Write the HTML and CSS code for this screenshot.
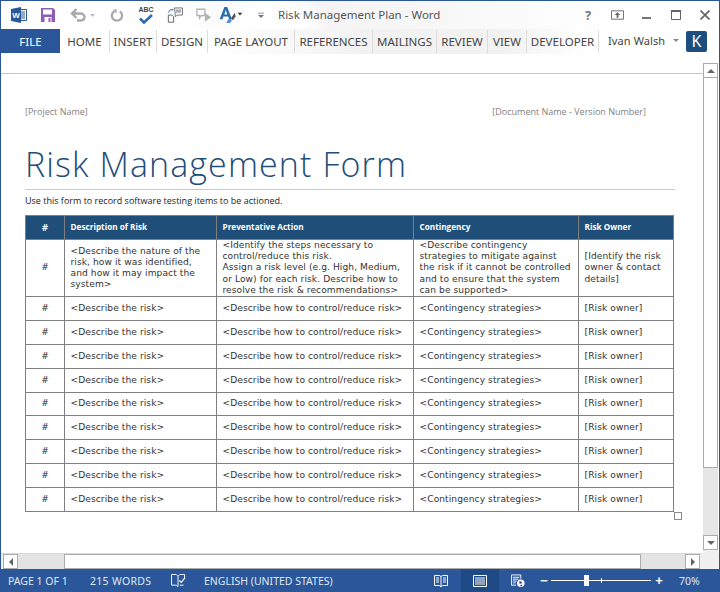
FILE: index.html
```html
<!DOCTYPE html>
<html lang="en">
<head>
<meta charset="utf-8">
<title>Risk Management Plan - Word</title>
<link rel="stylesheet" href="styles.css">
</head>
<body>
<div class="window">
  <header class="titlebar">
    <div class="qat">
      <svg class="ic word" viewBox="0 0 16 16"><path fill="#fff" stroke="#2b579a" d="M8 2.500h7.500v11H8z"/><path stroke="#2b579a" d="M10 5h4M10 7h4M10 9h4M10 11h4"/><path fill="#2b579a" d="M0 2l10-2v16L0 14z"/><text x="1.300" y="10.800" class="word-w">W</text></svg>
      <svg class="ic save" viewBox="0 0 14 14"><path fill="#8e5bb5" d="M0 0h12l2 2v12H0z"/><path fill="#fff" d="M2 1.500h9v5H2zM3.500 9h7v5h-7z"/><path fill="#8e5bb5" d="M7.500 10h2v4h-2z"/></svg>
      <svg class="ic undo" viewBox="0 0 25 14"><path fill="none" stroke="#a9a9a9" stroke-width="2.400" d="M3 5.500h7c6 0 6 7 0 7H7M6.500 1l-4.500 4.500 4.500 4.500"/><path fill="#bdbdbd" d="M20 6h5l-2.500 3z"/></svg>
      <svg class="ic redo" viewBox="0 0 14 14"><path fill="none" stroke="#a9a9a9" stroke-width="2.400" d="M4.500 2.500a5.500 5.500 0 1 0 6 0"/><path fill="#a9a9a9" d="M7 0v5L3 1z"/></svg>
      <span class="abc-wrap"><span class="abc">ABC</span><svg class="abc-check" viewBox="0 0 14 10"><path fill="none" stroke="#2b6cb0" stroke-width="2.600" d="M1 4.500l4 4 8-7.500"/></svg></span>
      <svg class="ic touch" viewBox="0 0 18 18"><path fill="#fff" stroke="#555" d="M1.500 8.500h4l2 2v6h-6z"/><path fill="#fff" stroke="#666" d="M8.500.5h9v8h-6l-2 2z"/><path stroke="#666" d="M10 3h6M10 5h6"/><path fill="none" stroke="#2b6cb0" d="M2 6c0-3 2-4 5-4M5 4l2-2"/></svg>
      <svg class="ic comment" viewBox="0 0 18 16"><path fill="#fff" stroke="#b3b3b3" stroke-width="1.500" d="M1 1h9v7H6l-2 3V8H1z"/><path fill="#b3b3b3" d="M10 5l7 5-7 5z"/></svg>
      <svg class="ic font" viewBox="0 0 24 18"><path fill="#2b6cb0" d="M5 0h3l5 13h-3l-1-3H4l-1 3H0zM5 8h3L6.500 3z"/><path fill="#555" d="M16 6l-4 6 2 2 3-4z"/><path fill="#4a90d9" d="M10 12l3 2-2 3H7z"/><path fill="#333" d="M19 6h5l-2.500 3z"/></svg>
      <svg class="ic custom" viewBox="0 0 8 8"><path fill="#777" d="M0 1h8v1H0zM0 4h8L4 8z"/></svg>
    </div>
    <h1 class="doc-title">Risk Management Plan - Word</h1>
    <div class="winctl">
      <span class="help">?</span>
      <svg class="ic display" viewBox="0 0 14 10"><path fill="none" stroke="#666" d="M.5.500h13v9H.5z"/><path fill="#666" d="M7 2l3 3H8v3H6V5H4z"/></svg>
      <svg class="ic min" viewBox="0 0 10 2"><path fill="#666" d="M0 0h10v2H0z"/></svg>
      <svg class="ic max" viewBox="0 0 10 10"><path fill="none" stroke="#666" d="M.5.500h9v9h-9z"/><path stroke="#666" stroke-width="2" d="M0 1h10"/></svg>
      <svg class="ic close" viewBox="0 0 10 10"><path stroke="#666" stroke-width="1.700" d="M.5.500l9 9M9.500.500l-9 9"/></svg>
    </div>
  </header>
  <nav class="tabs">
    <span class="file-tab">FILE</span>
    <span class="tab tab-home">HOME</span>
    <span class="tab tab-insert">INSERT</span>
    <span class="tab tab-design">DESIGN</span>
    <span class="tab tab-layout">PAGE LAYOUT</span>
    <span class="tab tab-refs">REFERENCES</span>
    <span class="tab tab-mail">MAILINGS</span>
    <span class="tab tab-review">REVIEW</span>
    <span class="tab tab-view">VIEW</span>
    <span class="tab tab-dev">DEVELOPER</span>
    <span class="user">Ivan Walsh <i class="caret"></i></span>
    <span class="avatar">K</span>
  </nav>
  <div class="workspace">
    <div class="main">
      <div class="collapsed"></div>
      <main class="doc">
        <div class="runhead"><span>[Project Name]</span><span>[Document Name - Version Number]</span></div>
        <h2 class="form-title">Risk Management Form</h2>
        <p class="intro">Use this form to record software testing items to be actioned.</p>
        <div class="table-wrap">
          <table class="risk">
            <colgroup><col class="c1"><col class="c2"><col class="c3"><col class="c4"><col class="c5"></colgroup>
            <thead><tr><th class="num">#</th><th>Description of Risk</th><th>Preventative Action</th><th>Contingency</th><th>Risk Owner</th></tr></thead>
            <tbody>
              <tr class="first"><td class="num">#</td><td>&lt;Describe the nature of the risk, how it was identified, and how it may impact the system&gt;</td><td>&lt;Identify the steps necessary to control/reduce this risk.<br>Assign a risk level (e.g. High, Medium, or Low) for each risk. Describe how to resolve the risk &amp; recommendations&gt;</td><td>&lt;Describe contingency strategies to mitigate against the risk if it cannot be controlled and to ensure that the system can be supported&gt;</td><td>[Identify the risk owner &amp; contact details]</td></tr>
              <tr><td class="num">#</td><td>&lt;Describe the risk&gt;</td><td>&lt;Describe how to control/reduce risk&gt;</td><td>&lt;Contingency strategies&gt;</td><td>[Risk owner]</td></tr>
              <tr><td class="num">#</td><td>&lt;Describe the risk&gt;</td><td>&lt;Describe how to control/reduce risk&gt;</td><td>&lt;Contingency strategies&gt;</td><td>[Risk owner]</td></tr>
              <tr><td class="num">#</td><td>&lt;Describe the risk&gt;</td><td>&lt;Describe how to control/reduce risk&gt;</td><td>&lt;Contingency strategies&gt;</td><td>[Risk owner]</td></tr>
              <tr><td class="num">#</td><td>&lt;Describe the risk&gt;</td><td>&lt;Describe how to control/reduce risk&gt;</td><td>&lt;Contingency strategies&gt;</td><td>[Risk owner]</td></tr>
              <tr><td class="num">#</td><td>&lt;Describe the risk&gt;</td><td>&lt;Describe how to control/reduce risk&gt;</td><td>&lt;Contingency strategies&gt;</td><td>[Risk owner]</td></tr>
              <tr><td class="num">#</td><td>&lt;Describe the risk&gt;</td><td>&lt;Describe how to control/reduce risk&gt;</td><td>&lt;Contingency strategies&gt;</td><td>[Risk owner]</td></tr>
              <tr><td class="num">#</td><td>&lt;Describe the risk&gt;</td><td>&lt;Describe how to control/reduce risk&gt;</td><td>&lt;Contingency strategies&gt;</td><td>[Risk owner]</td></tr>
              <tr><td class="num">#</td><td>&lt;Describe the risk&gt;</td><td>&lt;Describe how to control/reduce risk&gt;</td><td>&lt;Contingency strategies&gt;</td><td>[Risk owner]</td></tr>
              <tr><td class="num">#</td><td>&lt;Describe the risk&gt;</td><td>&lt;Describe how to control/reduce risk&gt;</td><td>&lt;Contingency strategies&gt;</td><td>[Risk owner]</td></tr>
            </tbody>
          </table>
          <span class="resize"></span>
        </div>
      </main>
    </div>
    <aside class="vscroll">
      <span class="sbtn"><i class="tri up"></i></span>
      <span class="vthumb"></span>
      <span class="vtrack"></span>
      <span class="sbtn"><i class="tri down"></i></span>
    </aside>
  </div>
  <div class="hscroll">
    <span class="sbtn"><i class="tri left"></i></span>
    <span class="htrack htrack-l"></span>
    <span class="hthumb"></span>
    <span class="htrack htrack-r"></span>
    <span class="sbtn"><i class="tri right"></i></span>
  </div>
  <footer class="status">
    <span class="st st-page">PAGE 1 OF 1</span>
    <span class="st st-words">215 WORDS</span>
    <svg class="proof" viewBox="0 0 16 14"><path fill="none" stroke="#fff" d="M.5.500h5l2 2v11l-2-1.500h-5zM7.500 2.500l2-2h5v5M9.500 12h4"/><path fill="none" stroke="#fff" stroke-width="1.300" d="M9 7l2 2 4-5"/></svg>
    <span class="st st-lang">ENGLISH (UNITED STATES)</span>
    <div class="views">
      <svg class="vw" viewBox="0 0 14 14"><path fill="none" stroke="#fff" d="M.5 1.500h5l1.500 1 1.500-1h5v10h-5L7 13l-1.500-1.500h-5zM7 2.500V13"/><path stroke="#fff" d="M2 4h3M2 6h3M2 8h3M9 4h3M9 6h3M9 8h3"/></svg>
      <span class="vw-active"><svg class="vw-print" viewBox="0 0 14 12"><path fill="none" stroke="#fff" d="M.5.500h13v11H.5z"/><path stroke="#fff" d="M2 3h10M2 5h10M2 7h10M2 9h10"/></svg></span>
      <svg class="vw" viewBox="0 0 15 14"><path fill="none" stroke="#fff" d="M.5.500h10v4M.5.500v11h5"/><path stroke="#fff" d="M2 3h7M2 5h6M2 7h4M2 9h3"/><circle cx="10.500" cy="9.500" r="4" fill="#fff"/><path fill="#2b579a" d="M9 7l3 1-1 2-2 0zM10 11h2v1.500h-2z"/></svg>
    </div>
    <div class="zoom">
      <span class="zm">−</span>
      <span class="slider"><i class="mid"></i><i class="thumb"></i></span>
      <span class="zm">+</span>
    </div>
    <span class="st st-pct">70%</span>
  </footer>
</div>
</body>
</html>
```

FILE: styles.css
```css
* { box-sizing: border-box; }
html, body { margin: 0; padding: 0; background: #fff; }
body { font-family: "Noto Sans", "Open Sans", sans-serif; }
.window {
  width: 720px; height: 592px; overflow: hidden;
  display: flex; flex-direction: column;
  border: 1px solid #2b579a; border-bottom: 0;
  background: #fff;
}
.titlebar {
  height: 28px; flex: none; display: flex; align-items: center; position: relative;
  background:
    radial-gradient(ellipse 60px 30px at 270px 20px, #fff 60%, transparent 100%),
    linear-gradient(90deg, #fff 25%, #f3f3f3 40%, #f7f7f7 60%, #fff 85%);
}
.ic { display: block; flex: none; }
.qat { display: flex; align-items: center; width: 277px; flex: none; }
.word { width: 16px; height: 16px; margin-left: 10px; }
.word-w { font: bold 8px "Liberation Sans", sans-serif; fill: #fff; }
.save { width: 14px; height: 14px; margin-left: 14px; }
.undo { width: 25px; height: 14px; margin-left: 15px; }
.redo { width: 13px; height: 13px; margin-left: 15px; }
.abc-wrap { width: 14px; height: 18px; margin-left: 16px; display: flex; flex-direction: column; align-items: center; flex: none; }
.abc { font: bold 7px/8px "Liberation Sans", sans-serif; color: #444; }
.abc-check { width: 14px; height: 10px; display: block; }
.touch { width: 16px; height: 17px; margin-left: 14px; }
.comment { width: 16px; height: 15px; margin-left: 13px; }
.font { width: 24px; height: 17px; margin-left: 7px; }
.custom { width: 6px; height: 6px; margin-left: 15px; }
.doc-title { margin: 0; font: 400 11.500px/16px "Noto Sans", sans-serif; color: #555; flex: 1; }
.winctl { display: flex; align-items: center; flex: none; padding-right: 9px; }
.help { font: bold 13px/14px "Noto Sans", sans-serif; color: #777; width: 8px; margin-right: 3px; }
.display { width: 13px; height: 10px; margin-left: 15px; }
.min { width: 9px; height: 2px; margin-left: 18px; margin-top: 6px; }
.max { width: 10px; height: 10px; margin-left: 20px; }
.close { width: 10px; height: 10px; margin-left: 19px; }

.tabs {
  height: 25px; flex: none; display: flex; align-items: flex-start;
  font-size: 11.500px; color: #444;
  background: linear-gradient(90deg, #fff 30%, #f2f2f2 50%, #f2f2f2 70%, #fff 82%);
}
.file-tab {
  width: 59px; height: 24px; background: #2b579a; color: #fff; text-align: center; line-height: 25px; flex: none;
}
.tab { line-height: 23px; border-right: 1px solid #dcdcdc; height: 23px; margin-top: 1px; text-align: center; flex: none; white-space: nowrap; }
.tab-home { width: 50px; }
.tab-insert { width: 47px; }
.tab-design { width: 51px; }
.tab-layout { width: 87px; }
.tab-refs { width: 78px; }
.tab-mail { width: 64px; }
.tab-review { width: 51px; }
.tab-view { width: 39px; }
.tab-dev { width: 72px; }
.user { margin-left: 9px; width: 78px; font-size: 11px; letter-spacing: .1px; line-height: 23px; display: flex; align-items: center; gap: 8px; height: 23px; white-space: nowrap; flex: none; }
.caret { width: 0; height: 0; border: 3px solid transparent; border-top: 3px solid #888; border-bottom: 0; }
.avatar {
  width: 21px; height: 21px; margin-top: 2px; border-radius: 2px; background: #1c4e80; color: #fff;
  text-align: center; font-size: 16px; line-height: 21px; flex: none;
}

.workspace { flex: 1; min-height: 0; display: flex; }
.main { flex: 1; min-width: 0; display: flex; flex-direction: column; }
.collapsed { height: 20px; flex: none; border-bottom: 1px solid #c6c6c6; }
.doc { flex: 1; min-height: 0; padding: 0 0 0 24px; overflow: hidden; }
.runhead {
  width: 621px; margin-top: 32px; display: flex; justify-content: space-between;
  font: 9px/12px "Open Sans", sans-serif; color: #7f7f7f;
}
.form-title {
  margin: 29px 0 0; width: 650px; height: 43px; border-bottom: 1px solid #c9c9c9;
  font: 300 34px/34px "Open Sans", sans-serif; letter-spacing: 1.100px; color: #1f4e79; white-space: nowrap;
}
.intro { margin: 5px 0 0; font: 9px/12px "Open Sans", sans-serif; color: #222; }
.table-wrap { position: relative; width: 650px; margin-top: 8px; }
.risk { width: 648px; table-layout: fixed; border-collapse: collapse; font: 9.100px/11.200px "DejaVu Sans", sans-serif; letter-spacing: .08px; color: #333; }
.c1 { width: 39px; } .c2 { width: 152px; } .c3 { width: 197px; } .c4 { width: 165px; } .c5 { width: 95px; }
.risk th, .risk td { border: 1px solid #7f7f7f; padding: 0 5.500px 0 5.500px; text-align: left; font-weight: 400; vertical-align: middle; }
.risk th { background: #1f4e79; height: 24px; padding-bottom: 1px; color: #fff; font: bold 8.200px/12px "Open Sans", sans-serif; letter-spacing: 0; }
.risk td { height: 23.900px; }
.risk .first td { height: 57px; }
.risk .num { text-align: center; padding: 0; }
.risk th.num { font-family: "DejaVu Sans", sans-serif; }
.resize { position: absolute; right: -7px; bottom: -8px; width: 8px; height: 8px; border: 1px solid #8c8c8c; background: #fff; }

.vscroll { width: 15px; flex: none; margin: 9px 1px 0 0; padding-bottom: 3px; display: flex; flex-direction: column; background: linear-gradient(#e6e6e6, #e6e6e6) 0 0/15px calc(100% - 3px) no-repeat, #f0f0f0; }
.sbtn { flex: none; width: 15px; height: 15px; background: #fff; border: 1px solid #ababab; display: flex; align-items: center; justify-content: center; }
.vthumb { height: 390px; background: #fff; border: 1px solid #ababab; border-top: 0; flex: none; }
.vtrack { flex: 1; }
.tri { display: block; width: 0; height: 0; border: 4px solid transparent; }
.tri.up { border-top: 0; border-bottom-color: #666; }
.tri.down { border-bottom: 0; border-top-color: #666; }
.tri.left { border-left: 0; border-right-color: #666; }
.tri.right { border-right: 0; border-left-color: #666; }

.hscroll { height: 16px; flex: none; display: flex; padding: 1px 19px 0 2px; background: linear-gradient(#d8d8d8, #d8d8d8) 0 0/701px 1px no-repeat, #f0f0f0; }
.htrack { background: #e3e3e3; flex: none; }
.htrack-l { width: 46px; }
.hthumb { flex: 1; background: #fff; border: 1px solid #ababab; }
.htrack-r { width: 44px; }

.status {
  height: 23px; flex: none; margin: 0 -1px; display: flex; align-items: center;
  background: #2b579a; color: #dfe7f3; font-size: 10.500px; white-space: nowrap;
}
.st-page { margin-left: 8px; width: 82px; }
.st-words { width: 81px; letter-spacing: .3px; }
.proof { width: 15px; height: 13px; flex: none; }
.st-lang { margin-left: 18px; width: 203px; }
.views { display: flex; align-items: center; height: 23px; margin-left: 27px; }
.vw { width: 14px; height: 14px; display: block; flex: none; }
.vw-active { width: 38px; height: 23px; margin: 0 12px 0 13px; background: #1f4a85; display: flex; align-items: center; justify-content: center; flex: none; }
.vw-print { width: 14px; height: 12px; display: block; }
.zoom { display: flex; align-items: center; margin-left: 14px; }
.zm { color: #fff; font: bold 13px/14px "Liberation Sans", sans-serif; width: 10px; text-align: center; }
.slider { position: relative; display: block; width: 100px; height: 1px; background: #fff; margin: 0 3px 0 2px; }
.slider .mid { position: absolute; left: 50px; top: -2px; width: 1px; height: 5px; background: #fff; }
.slider .thumb { position: absolute; left: 33px; top: -5px; width: 5px; height: 11px; background: #fff; }
.st-pct { margin-left: 15px; }
```
